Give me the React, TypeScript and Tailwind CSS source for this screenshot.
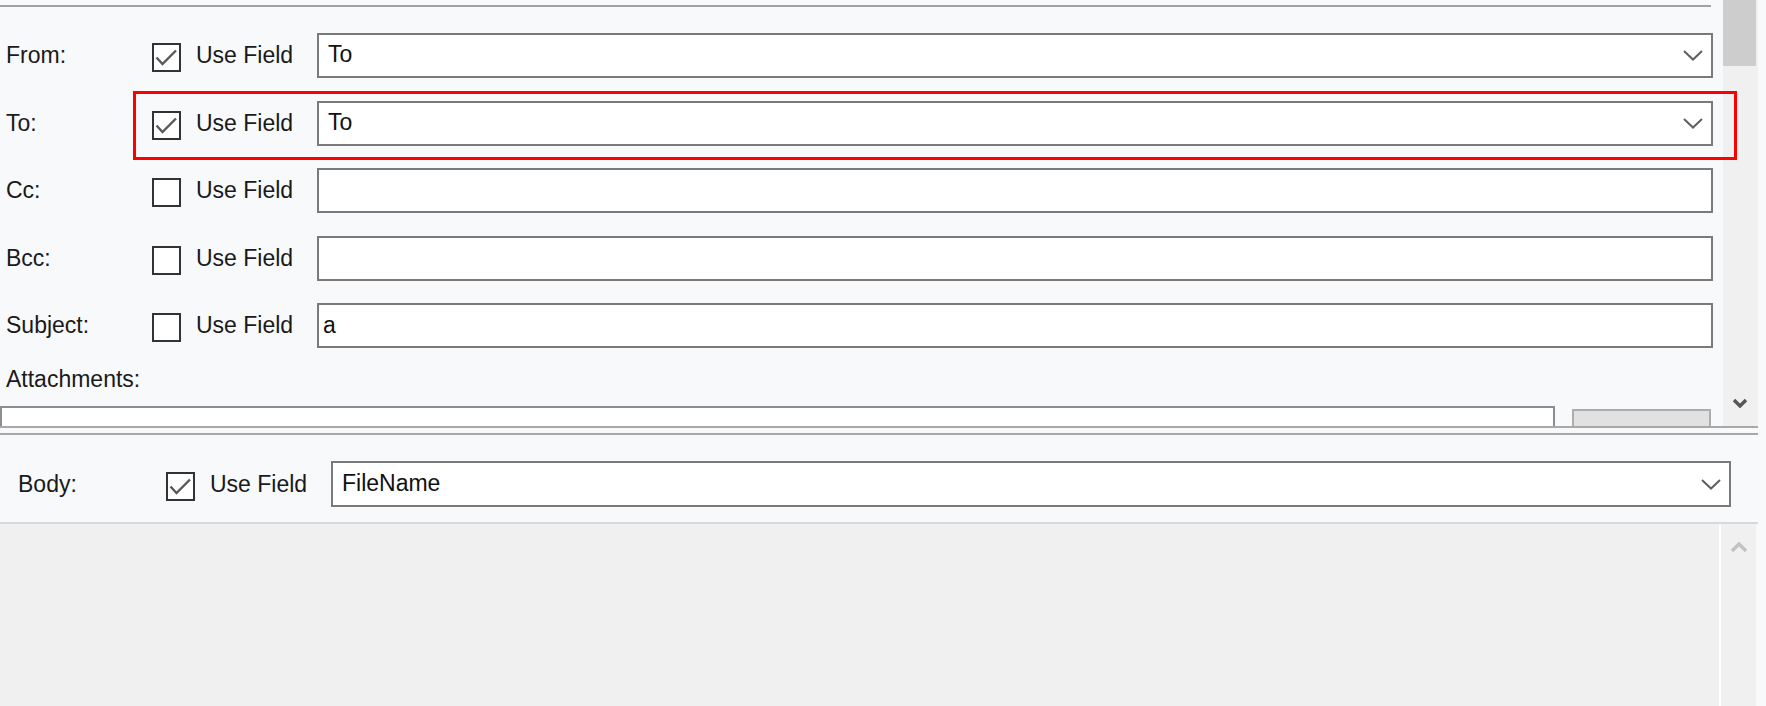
import React from "react";

const font = { fontFamily: '"Liberation Sans", Arial, sans-serif' };

function Check({ checked }: { checked: boolean }) {
  return (
    <div className="w-[29px] h-[29px] border-2 border-[#333333] bg-white shrink-0 flex items-center justify-center">
      {checked && (
        <svg width="25" height="25" viewBox="0 0 25 25">
          <path d="M2.5 12.5 L8.5 19 L22 5.5" fill="none" stroke="#5a5a5a" strokeWidth="2.4" />
        </svg>
      )}
    </div>
  );
}

function Chevron() {
  return (
    <svg width="20" height="11" viewBox="0 0 20 11" className="shrink-0">
      <path d="M1 1 L10 9.5 L19 1" fill="none" stroke="#5f5f5f" strokeWidth="2" />
    </svg>
  );
}

function Combo({ value, tall }: { value: string; tall?: boolean }) {
  return (
    <div
      className={
        tall
          ? "flex-1 h-[46px] border-2 border-[#7a7a7a] bg-white flex items-center pl-[9px] pr-[8px]"
          : "flex-1 h-[45px] border-2 border-[#7a7a7a] bg-white flex items-center pl-[9px] pr-[8px]"
      }
    >
      <span className="flex-1 text-[23px] text-[#111] mb-[2px]">{value}</span>
      <Chevron />
    </div>
  );
}

function TextBox({ value }: { value: string }) {
  return (
    <div className="flex-1 h-[45px] border-2 border-[#7a7a7a] bg-white flex items-center pl-[4px]">
      <span className="text-[23px] text-[#111]">{value}</span>
    </div>
  );
}

function Row({
  label,
  checked,
  combo,
  value,
}: {
  label: string;
  checked: boolean;
  combo: boolean;
  value: string;
}) {
  return (
    <div className="flex items-center h-[45px] w-[1713px]">
      <span className="w-[152px] pl-[6px] text-[23px] text-[#1a1a1a]">{label}</span>
      <div className="mt-[4px]">
        <Check checked={checked} />
      </div>
      <span className="ml-[15px] w-[121px] text-[23px] text-[#1a1a1a]">Use Field</span>
      {combo ? <Combo value={value} /> : <TextBox value={value} />}
    </div>
  );
}

export default function App() {
  return (
    <div className="w-[1766px] h-[706px] overflow-hidden bg-[#f8f9fb] flex flex-col" style={font}>
      {/* top scrolled panel */}
      <div className="relative h-[426px] flex overflow-hidden shrink-0">
        <div className="w-[1723px] flex flex-col">
          <div className="mt-[5px] w-[1711px] h-[5px] border-t-2 border-l-2 border-[#a3a3a3]" />
          <div className="mt-[26px] flex flex-col gap-[22.5px]">
            <Row label="From:" checked combo value="To" />
            <Row label="To:" checked combo value="To" />
            <Row label="Cc:" checked={false} combo={false} value="" />
            <Row label="Bcc:" checked={false} combo={false} value="" />
            <Row label="Subject:" checked={false} combo={false} value="a" />
          </div>
          <span className="mt-[17px] pl-[6px] text-[23px] text-[#1a1a1a] leading-[28px]">Attachments:</span>
          <div className="mt-[13px] flex items-start">
            <div className="w-[1555px] h-[60px] border-2 border-[#8a8d93] bg-white" />
            <div className="ml-[17px] mt-[3px] w-[139px] h-[50px] border-2 border-[#adadad] bg-[#e1e1e1]" />
          </div>
        </div>
        <div className="w-[35px] bg-[#f0f0f0] flex flex-col justify-between">
          <div className="w-[33px] h-[66px] bg-[#cdcdcd]" />
          <div className="h-[34px] w-[33px] flex items-center justify-center mb-[6px]">
            <svg width="16" height="10" viewBox="0 0 16 10">
              <path d="M2 2 L8 8 L14 2" fill="none" stroke="#555555" strokeWidth="3.4" />
            </svg>
          </div>
        </div>
        <div className="flex-1" />
        {/* highlight frame */}
        <div className="absolute left-[133px] top-[91px] w-[1604px] h-[69px] border-[3px] border-[#ff0000]" />
      </div>

      {/* splitter */}
      <div className="w-[1758px] h-[2px] bg-[#a8a8a8]" />
      <div className="w-[1758px] h-[5px]" />
      <div className="w-[1758px] h-[2px] bg-[#a8a8a8]" />

      {/* body panel */}
      <div className="pt-[26px] pb-[15px] w-[1758px]">
        <div className="flex items-center h-[46px] w-[1731px]">
          <span className="w-[166px] pl-[18px] text-[23px] text-[#1a1a1a]">Body:</span>
          <div className="mt-[4px]">
            <Check checked />
          </div>
          <span className="ml-[15px] w-[121px] text-[23px] text-[#1a1a1a]">Use Field</span>
          <Combo value="FileName" tall />
        </div>
      </div>
      <div className="w-[1758px] h-[2px] bg-[#d8d8d8]" />
      <div className="flex flex-1">
        <div className="w-[1719px] bg-[#f0f0f0]" />
        <div className="w-[2px] bg-white" />
        <div className="w-[35px] bg-[#f0f0f0] flex justify-center pt-[18px]">
          <svg width="18" height="11" viewBox="0 0 18 11">
            <path d="M2 9 L9 2 L16 9" fill="none" stroke="#c2c2c2" strokeWidth="3.4" />
          </svg>
        </div>
        <div className="flex-1" />
      </div>
    </div>
  );
}
